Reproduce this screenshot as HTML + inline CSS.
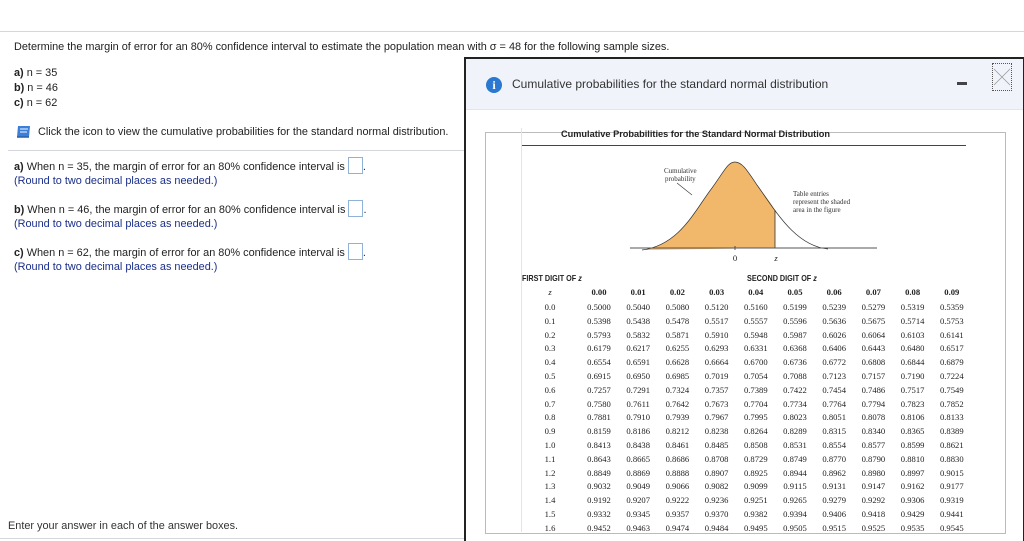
<!DOCTYPE html>
<html><head><meta charset="utf-8"><style>
html,body{margin:0;width:1024px;height:541px;overflow:hidden}
body{background:#fff;font-family:"Liberation Sans",sans-serif;position:relative;color:#222}
.a{position:absolute;white-space:nowrap}
.t{font-size:10.9px}
.blue{color:#1a2f8a}
.box{display:inline-block;width:13px;height:15px;border:1px solid #8fb2d8;vertical-align:-4px;margin-left:3px}
.s{font-family:"Liberation Serif",serif;font-size:8.6px;color:#222;position:absolute;transform:translateX(-50%)}
.b{font-weight:bold}
</style></head><body>
<div class="a" style="left:0;top:31px;width:1024px;border-top:1px solid #d4d8de"></div>
<div class="a t" style="left:14px;top:41px">Determine the margin of error for an 80% confidence interval to estimate the population mean with σ = 48 for the following sample sizes.</div>
<div class="a t" style="left:14px;top:67px"><b>a)</b> n = 35</div>
<div class="a t" style="left:14px;top:82px"><b>b)</b> n = 46</div>
<div class="a t" style="left:14px;top:97px"><b>c)</b> n = 62</div>
<svg class="a" style="left:15px;top:124px" width="18" height="16"><path d="M3 2h12l-1 11H2z" fill="#3b7fd6"/><path d="M5 5h8M5 8h7" stroke="#cfe2fa" stroke-width="1.2"/><path d="M2 13h12" stroke="#2a5fa8" stroke-width="1.5"/></svg>
<div class="a t" style="left:38px;top:126px">Click the icon to view the cumulative probabilities for the standard normal distribution.</div>
<div class="a" style="left:8px;top:150px;width:456px;border-top:1px solid #d4d8de"></div>
<div class="a t" style="left:14px;top:157px"><b>a)</b> When n = 35, the margin of error for an 80% confidence interval is<span class="box"></span>.</div>
<div class="a t blue" style="left:14px;top:175px">(Round to two decimal places as needed.)</div>
<div class="a t" style="left:14px;top:200px"><b>b)</b> When n = 46, the margin of error for an 80% confidence interval is<span class="box"></span>.</div>
<div class="a t blue" style="left:14px;top:218px">(Round to two decimal places as needed.)</div>
<div class="a t" style="left:14px;top:243px"><b>c)</b> When n = 62, the margin of error for an 80% confidence interval is<span class="box"></span>.</div>
<div class="a t blue" style="left:14px;top:261px">(Round to two decimal places as needed.)</div>
<div class="a t" style="left:8px;top:520px;color:#333">Enter your answer in each of the answer boxes.</div>
<div class="a" style="left:0;top:538px;width:1024px;border-top:1px solid #d4d8de"></div>

<div class="a" style="left:464px;top:57px;width:557px;height:482px;border:2px solid #222;border-bottom:none;background:#fff;overflow:hidden">
 <div style="position:absolute;left:0;top:0;right:0;height:50px;background:#f0f4fa;border-bottom:1px solid #dde6f2"></div>
 <div style="position:absolute;left:20px;top:18px;width:16px;height:16px;border-radius:50%;background:#2a78d0;color:#fff;font:bold 12px 'Liberation Serif',serif;text-align:center;line-height:16px">i</div>
 <div style="position:absolute;left:46px;top:18px;font-size:12px;color:#333">Cumulative probabilities for the standard normal distribution</div>
 <div style="position:absolute;left:491px;top:23px;width:10px;height:3px;background:#444"></div>
 <div style="position:absolute;left:526px;top:4px;width:18px;height:26px;border:1px dotted #555"><svg width="18" height="26"><path d="M1 5L17 21M17 5L1 21" stroke="#999" stroke-width="0.8"/></svg></div>
 <div style="position:absolute;left:19px;top:73px;width:519px;height:400px;border:1px solid #bbb"></div>
</div>
<div class="a" style="left:521px;top:128px;width:1px;height:404px;background:#e4e4e4"></div>
<div class="a b" style="left:561px;top:129px;font-size:9.2px;color:#222">Cumulative Probabilities for the Standard Normal Distribution</div>
<div class="a" style="left:522px;top:145px;width:444px;border-top:1px solid #444"></div>
<svg class="a" style="left:600px;top:150px" width="280" height="115">
<path d="M42 100 C80 95 95 60 112 38 C125 20 128 12 135 12 C142 12 147 20 157 35 C165 45 172 55 175 60 L175 98 Z" fill="#f1b86c"/>
<path d="M42 100 C80 95 95 60 112 38 C125 20 128 12 135 12 C142 12 147 20 157 35 C175 60 195 96 228 99" fill="none" stroke="#333" stroke-width="0.7"/>
<path d="M175 60V98M135 96v4" stroke="#333" stroke-width="0.8"/>
<path d="M30 98H277" stroke="#555" stroke-width="1"/>
<path d="M77 33L92 45" stroke="#333" stroke-width="0.6"/>
</svg>
<div class="a" style="left:664px;top:167px;font:7px 'Liberation Serif',serif;line-height:8px;color:#333;text-align:center">Cumulative<br>probability</div>
<div class="a" style="left:793px;top:190px;font:7px 'Liberation Serif',serif;line-height:8px;color:#333">Table entries<br>represent the shaded<br>area in the figure</div>
<div class="s" style="left:735px;top:253px">0</div><div class="s" style="left:776px;top:253px;font-style:italic">z</div>
<div class="a b" style="left:522px;top:273px;font-size:8.5px;transform:scaleX(0.85);transform-origin:left">FIRST DIGIT OF <i>z</i></div>
<div class="a b" style="left:747px;top:273px;font-size:8.5px;transform:scaleX(0.85);transform-origin:left">SECOND DIGIT OF <i>z</i></div>
<div id="tb" style="position:absolute;left:0;top:0;width:1024px;height:532px;overflow:hidden"></div>
<script>
var rows=[["0.0","0.5000 0.5040 0.5080 0.5120 0.5160 0.5199 0.5239 0.5279 0.5319 0.5359"],["0.1","0.5398 0.5438 0.5478 0.5517 0.5557 0.5596 0.5636 0.5675 0.5714 0.5753"],["0.2","0.5793 0.5832 0.5871 0.5910 0.5948 0.5987 0.6026 0.6064 0.6103 0.6141"],["0.3","0.6179 0.6217 0.6255 0.6293 0.6331 0.6368 0.6406 0.6443 0.6480 0.6517"],["0.4","0.6554 0.6591 0.6628 0.6664 0.6700 0.6736 0.6772 0.6808 0.6844 0.6879"],["0.5","0.6915 0.6950 0.6985 0.7019 0.7054 0.7088 0.7123 0.7157 0.7190 0.7224"],["0.6","0.7257 0.7291 0.7324 0.7357 0.7389 0.7422 0.7454 0.7486 0.7517 0.7549"],["0.7","0.7580 0.7611 0.7642 0.7673 0.7704 0.7734 0.7764 0.7794 0.7823 0.7852"],["0.8","0.7881 0.7910 0.7939 0.7967 0.7995 0.8023 0.8051 0.8078 0.8106 0.8133"],["0.9","0.8159 0.8186 0.8212 0.8238 0.8264 0.8289 0.8315 0.8340 0.8365 0.8389"],["1.0","0.8413 0.8438 0.8461 0.8485 0.8508 0.8531 0.8554 0.8577 0.8599 0.8621"],["1.1","0.8643 0.8665 0.8686 0.8708 0.8729 0.8749 0.8770 0.8790 0.8810 0.8830"],["1.2","0.8849 0.8869 0.8888 0.8907 0.8925 0.8944 0.8962 0.8980 0.8997 0.9015"],["1.3","0.9032 0.9049 0.9066 0.9082 0.9099 0.9115 0.9131 0.9147 0.9162 0.9177"],["1.4","0.9192 0.9207 0.9222 0.9236 0.9251 0.9265 0.9279 0.9292 0.9306 0.9319"],["1.5","0.9332 0.9345 0.9357 0.9370 0.9382 0.9394 0.9406 0.9418 0.9429 0.9441"],["1.6","0.9452 0.9463 0.9474 0.9484 0.9495 0.9505 0.9515 0.9525 0.9535 0.9545"]];
var h='<div class="s" style="left:550px;top:287px;font-style:italic">z</div>';
for(var c=0;c<10;c++)h+='<div class="s b" style="left:'+(599+c*39.2)+'px;top:287px">0.0'+c+'</div>';
rows.forEach(function(r,i){var y=302+i*13.8;h+='<div class="s" style="left:550px;top:'+y+'px">'+r[0]+'</div>';r[1].split(' ').forEach(function(v,c){h+='<div class="s" style="left:'+(599+c*39.2)+'px;top:'+y+'px">'+v+'</div>';});});
document.getElementById('tb').innerHTML=h;
</script>
</body></html>
